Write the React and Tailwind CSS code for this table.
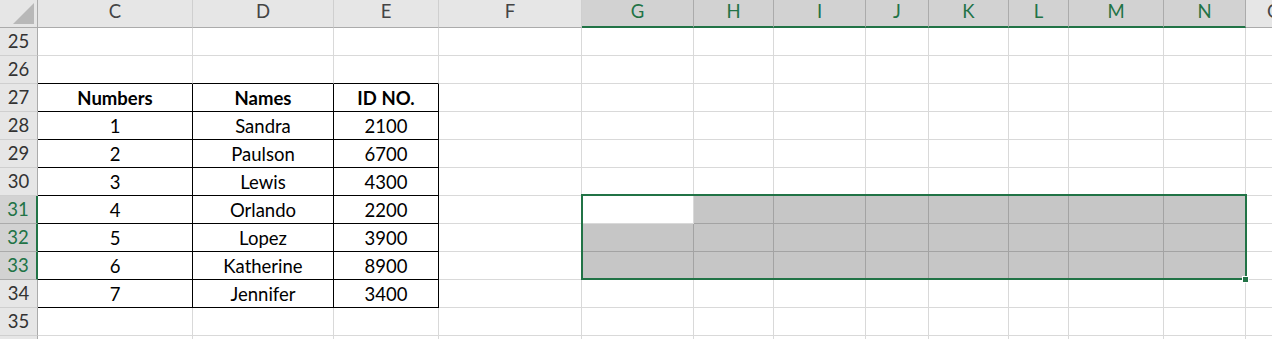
import React from 'react'

const cols = [
  { key: 'C', w: 155 },
  { key: 'D', w: 141 },
  { key: 'E', w: 105 },
  { key: 'F', w: 143 },
  { key: 'G', w: 112 },
  { key: 'H', w: 80 },
  { key: 'I', w: 92 },
  { key: 'J', w: 63 },
  { key: 'K', w: 80 },
  { key: 'L', w: 60 },
  { key: 'M', w: 95 },
  { key: 'N', w: 82 },
  { key: 'O', w: 58 },
]

const selCols = ['G', 'H', 'I', 'J', 'K', 'L', 'M', 'N']
const selRows = [31, 32, 33]

// table sits in C27:E34
const table = {
  27: ['Numbers', 'Names', 'ID NO.'],
  28: ['1', 'Sandra', '2100'],
  29: ['2', 'Paulson', '6700'],
  30: ['3', 'Lewis', '4300'],
  31: ['4', 'Orlando', '2200'],
  32: ['5', 'Lopez', '3900'],
  33: ['6', 'Katherine', '8900'],
  34: ['7', 'Jennifer', '3400'],
}

const rows = [25, 26, 27, 28, 29, 30, 31, 32, 33, 34, 35, 36]

function ColumnHeader({ col }) {
  const sel = selCols.includes(col.key)
  return (
    <div
      className={
        'flex h-[28px] items-start justify-center overflow-hidden border-r pt-[2px] ' +
        (sel
          ? 'border-r-[#ababab] bg-[#d2d2d2] text-[#217346] border-b-2 border-b-[#217346]'
          : 'border-r-[#cfcfcf] bg-[#e6e6e6] text-[#444] border-b border-b-[#ababab]')
      }
    >
      {col.key}
    </div>
  )
}

function RowHeader({ row }) {
  const sel = selRows.includes(row)
  return (
    <div
      className={
        'flex h-[28px] items-center justify-center border-b ' +
        (sel
          ? 'border-b-[#ababab] bg-[#d2d2d2] text-[#217346] border-r-2 border-r-[#217346]'
          : 'border-b-[#cfcfcf] bg-[#e6e6e6] text-[#333] border-r border-r-[#ababab]')
      }
    >
      {/* last row is only a sliver at the bottom edge */}
      {row < 36 ? row : null}
    </div>
  )
}

function Cell({ row, colIndex, col }) {
  const inTable = table[row] && colIndex < 3
  const aboveTable = row === 26 && colIndex < 3
  const sel = selRows.includes(row) && selCols.includes(col.key)
  const active = row === 31 && col.key === 'G'
  const filled = sel && !active

  let cls = 'flex h-[28px] items-center justify-center border-r border-b pt-[1px] '
  cls += filled ? 'bg-[#c6c6c6] ' : 'bg-white '
  if (inTable) {
    cls += 'border-r-black border-b-black '
  } else if (aboveTable) {
    cls += 'border-b-black border-r-[#d9d9d9] '
  } else if (filled) {
    cls += 'border-r-[#a3a3a3] border-b-[#a3a3a3] '
  } else {
    cls += 'border-r-[#d9d9d9] border-b-[#d9d9d9] '
  }
  if (row === 27 && inTable) cls += 'font-bold '

  return <div className={cls}>{inTable ? table[row][colIndex] : null}</div>
}

export default function App() {
  return (
    <div
      className="relative h-[339px] w-[1272px] overflow-hidden bg-white text-[18.5px] leading-none text-black"
      style={{ fontFamily: 'Lato, "Open Sans", sans-serif' }}
    >
      <div className="grid w-[1304px] grid-cols-[38px_155px_141px_105px_143px_112px_80px_92px_63px_80px_60px_95px_82px_58px]">
        {/* corner: select-all triangle */}
        <div className="flex h-[28px] items-end justify-end border-r border-b border-r-[#ababab] border-b-[#ababab] bg-[#e6e6e6] pb-[3px] pr-[3px]">
          <svg width="21" height="21" viewBox="0 0 21 21">
            <polygon points="0,21 21,21 21,0" fill="#b8b8b8" />
          </svg>
        </div>
        {cols.map((c) => (
          <ColumnHeader key={c.key} col={c} />
        ))}

        {rows.map((r) => (
          <React.Fragment key={r}>
            <RowHeader row={r} />
            {cols.map((c, i) => (
              <Cell key={c.key} row={r} colIndex={i} col={c} />
            ))}
          </React.Fragment>
        ))}
      </div>

      {/* selection outline G31:N33 */}
      <div className="pointer-events-none absolute left-[581px] top-[194px] h-[86px] w-[666px] border-2 border-[#217346]" />
      {/* fill handle */}
      <div className="pointer-events-none absolute left-[1242px] top-[276px] h-[7px] w-[7px] border border-white bg-[#217346]" />
    </div>
  )
}
